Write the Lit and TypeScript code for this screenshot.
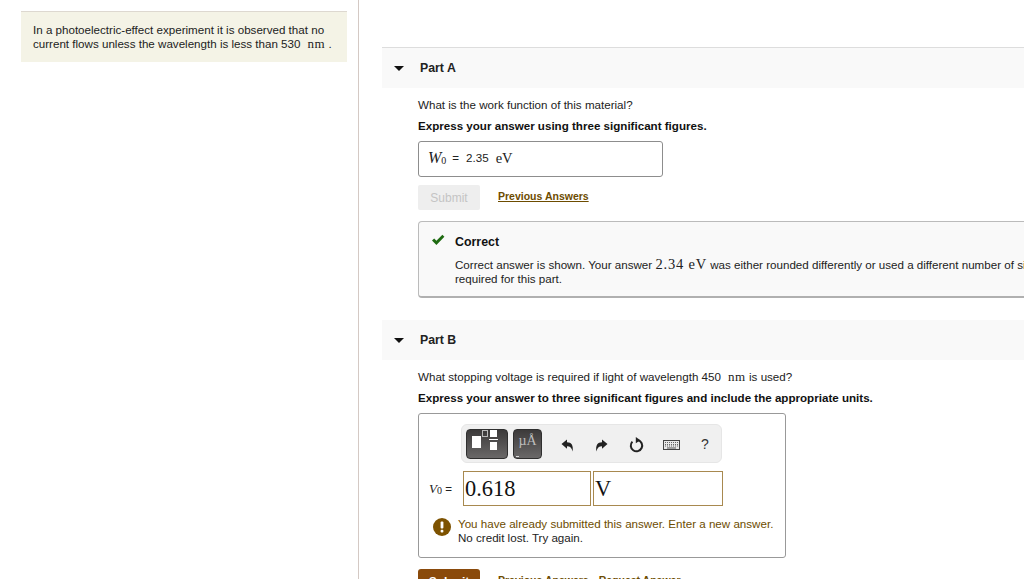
import { LitElement, html, css } from 'lit';
import { customElement } from 'lit/decorators.js';

@customElement('app-root')
export class AppRoot extends LitElement {
  static styles = css`
    :host {
      display: flex;
      width: 1024px;
      height: 579px;
      overflow: hidden;
      background: #fff;
      color: #222;
      font-family: "Liberation Sans", Arial, sans-serif;
      font-size: 11.6px;
      line-height: 14px;
    }

    .left {
      flex: none;
      width: 359px;
      height: 579px;
      box-sizing: border-box;
      border-right: 1px solid #d4c9c4;
      padding-top: 11px;
    }

    .statement {
      margin-left: 21px;
      width: 326px;
      height: 51px;
      box-sizing: border-box;
      border-top: 1px solid #ddd8d0;
      background: #f4f3e6;
      padding: 11px 0 0 12px;
    }

    .right {
      flex: none;
      margin-left: 23px;
      width: 642px;
      padding-top: 47px;
    }

    .part-head {
      display: flex;
      align-items: center;
      height: 40px;
      background: #f9f9f9;
      font-size: 12.3px;
      font-weight: bold;
      color: #222;
    }

    .part-head.first {
      border-top: 1px solid #ddd;
    }

    .caret {
      width: 0;
      height: 0;
      margin: 0 16px 0 12px;
      border-left: 5px solid transparent;
      border-right: 5px solid transparent;
      border-top: 5px solid #111;
    }

    .part-body {
      padding-left: 36px;
    }

    .q {
      margin-top: 10px;
    }

    .hint {
      margin-top: 7px;
      font-weight: bold;
      color: #111;
    }

    .mth {
      font-family: "Liberation Serif", "Times New Roman", serif;
      font-size: 13px;
      letter-spacing: 0.6px;
    }

    .answer {
      display: flex;
      align-items: center;
      width: 245px;
      height: 36px;
      margin-top: 8px;
      padding: 0 0 2px 9px;
      box-sizing: border-box;
      border: 1px solid #8d8d8d;
      border-radius: 3px;
    }

    .answer i {
      font-family: "Liberation Serif", serif;
      font-size: 16px;
    }

    .answer sub {
      font-family: "Liberation Serif", serif;
      font-size: 10px;
      line-height: 0;
      margin-top: 6px;
    }

    .answer .eq {
      margin: 0 7px 0 6px;
    }

    .answer .unit {
      margin-left: 7px;
      font-family: "Liberation Serif", serif;
      font-size: 14.5px;
    }

    .actions {
      display: flex;
      align-items: center;
      margin-top: 8px;
      height: 25px;
    }

    .actions.last {
      margin-top: 11px;
    }

    .submit {
      display: flex;
      align-items: center;
      justify-content: center;
      width: 62px;
      height: 25px;
      border-radius: 2px;
      background: #eee;
      color: #c4c4c4;
      font-size: 12px;
    }

    .submit.active {
      background: #8a4a0b;
      color: #fff;
      font-weight: bold;
      border-radius: 3px;
    }

    .link {
      margin-left: 18px;
      color: #6d4c00;
      font-weight: bold;
      font-size: 10.5px;
      text-decoration: underline;
      padding-bottom: 3px;
    }

    .link.plain {
      text-decoration: none;
    }

    .link.plain + .link.plain {
      margin-left: 10px;
    }

    .correct {
      position: relative;
      width: 760px;
      height: 77px;
      margin-top: 11px;
      box-sizing: border-box;
      border: 1px solid #bbb;
      border-bottom: 2px solid #b0b0b0;
      border-radius: 4px;
      background: #f9f9f9;
      padding: 13px 0 0 36px;
    }

    .correct svg {
      position: absolute;
      left: 12px;
      top: 12px;
    }

    .correct b {
      display: block;
      font-size: 12.4px;
      color: #111;
      margin-bottom: 9px;
    }

    .correct .mth {
      font-size: 14.5px;
      letter-spacing: 0.8px;
      line-height: 0;
    }

    .correct .line {
      display: block;
      white-space: nowrap;
      line-height: 14px;
    }

    .part-b {
      margin-top: 22px;
    }

    .workspace {
      width: 368px;
      height: 145px;
      margin-top: 8px;
      box-sizing: border-box;
      border: 1px solid #999;
      border-radius: 3px;
      padding-top: 10px;
    }

    .toolbar {
      display: flex;
      align-items: center;
      width: 261px;
      height: 39px;
      margin-left: 42px;
      box-sizing: border-box;
      padding: 0 0 0 4px;
      border: 1px solid #e6e6e6;
      border-radius: 6px;
      background: #f0f0f0;
    }

    .tpl {
      display: flex;
      flex: none;
      height: 30px;
      box-sizing: border-box;
      border: 1px solid #2f2f2f;
      border-radius: 4px;
      background: linear-gradient(#3c3a3a, #6a6868);
      overflow: hidden;
    }

    .tpl.frac {
      width: 42px;
      margin-right: 5px;
    }

    .tpl.units {
      position: relative;
      width: 29px;
      margin-right: 18px;
      justify-content: center;
      color: #bdbdbd;
      font-family: "Liberation Serif", serif;
      font-size: 14px;
      line-height: 21px;
    }

    .tpl.units::after {
      content: "";
      position: absolute;
      left: 2px;
      bottom: 1px;
      width: 3px;
      height: 1px;
      background: #ddd;
    }

    .tool {
      display: flex;
      flex: none;
      justify-content: center;
      align-items: center;
      padding-top: 3px;
      color: #333;
    }

    .tool.undo,
    .tool.redo {
      width: 15px;
      margin-right: 19px;
    }

    .tool.reset {
      width: 16px;
      margin-right: 18px;
    }

    .tool.keys {
      width: 18px;
      margin-right: 20px;
    }

    .tool.help {
      width: 10px;
      font-size: 14px;
      padding-top: 0;
    }

    .entry {
      display: flex;
      align-items: center;
      height: 35px;
      margin-top: 8px;
    }

    .var {
      flex: none;
      width: 44px;
      box-sizing: border-box;
      padding-left: 10px;
      white-space: nowrap;
    }

    .var i {
      font-family: "Liberation Serif", serif;
      font-size: 13px;
    }

    .var sub {
      font-family: "Liberation Serif", serif;
      font-size: 10px;
      line-height: 0;
      vertical-align: -1px;
    }

    .field {
      flex: none;
      display: flex;
      align-items: center;
      width: 128px;
      height: 35px;
      box-sizing: border-box;
      border: 1px solid #a8894f;
      padding-left: 1px;
      font-family: "Liberation Serif", serif;
      font-size: 22.4px;
      color: #111;
    }

    .field + .field {
      width: 130px;
      margin-left: 2px;
    }

    .warn {
      display: flex;
      margin: 11px 0 0 14px;
      line-height: 14px;
    }

    .warn svg {
      flex: none;
      margin: 1px 7px 0 0;
    }

    .warn .msg {
      color: #6d4c00;
    }
  `;

  render() {
    return html`
      <div class="left">
        <div class="statement">
          In a photoelectric-effect experiment it is observed that no<br />
          current flows unless the wavelength is less than 530 <span class="mth">&nbsp;nm</span> .
        </div>
      </div>
      <div class="right">
        <div class="part-head first"><span class="caret"></span>Part A</div>
        <div class="part-body">
          <div class="q">What is the work function of this material?</div>
          <div class="hint">Express your answer using three significant figures.</div>
          <div class="answer">
            <i>W</i><sub>0</sub><span class="eq">=</span>2.35<span class="unit">eV</span>
          </div>
          <div class="actions">
            <span class="submit">Submit</span>
            <span class="link">Previous Answers</span>
          </div>
          <div class="correct">
            <svg width="14" height="12" viewBox="0 0 14 12">
              <path d="M1 6.5 L3.2 4.4 L5.4 6.8 L11.4 0.8 L13.4 2.8 L5.4 11 Z" fill="#1f6b12" />
            </svg>
            <b>Correct</b>
            <span class="line"
              >Correct answer is shown. Your answer <span class="mth">2.34 eV</span> was either rounded
              differently or used a different number of significant figures than</span
            >
            <span class="line">required for this part.</span>
          </div>
        </div>
        <div class="part-head part-b"><span class="caret"></span>Part B</div>
        <div class="part-body">
          <div class="q">
            What stopping voltage is required if light of wavelength 450 <span class="mth">&nbsp;nm</span> is used?
          </div>
          <div class="hint">Express your answer to three significant figures and include the appropriate units.</div>
          <div class="workspace">
            <div class="toolbar">
              <span class="tpl frac">
                <svg width="40" height="28" viewBox="0 0 40 28">
                  <rect x="5" y="6" width="9" height="12" fill="#fff" />
                  <rect x="15.5" y="0.5" width="5" height="6" fill="none" stroke="#bbb" />
                  <rect x="23" y="0" width="7" height="7" fill="#fff" />
                  <rect x="22" y="9" width="9" height="1" fill="#fff" />
                  <rect x="23" y="12" width="7" height="8" fill="#fff" />
                </svg>
              </span>
              <span class="tpl units">µÅ</span>
              <span class="tool undo">
                <svg width="13" height="13" viewBox="0 0 13 13">
                  <path d="M0.5 5 L6 0.5 V3.3 C10.5 3.3 12.6 6.5 11.6 12.5 C10.8 9 9.2 7.2 6 7.2 V9.8 Z" fill="#222" />
                </svg>
              </span>
              <span class="tool redo">
                <svg width="13" height="13" viewBox="0 0 13 13">
                  <path d="M12.5 5 L7 0.5 V3.3 C2.5 3.3 0.4 6.5 1.4 12.5 C2.2 9 3.8 7.2 7 7.2 V9.8 Z" fill="#222" />
                </svg>
              </span>
              <span class="tool reset">
                <svg width="15" height="16" viewBox="0 0 15 16">
                  <path d="M9 3.1 A5.7 5.7 0 1 1 3.4 4.6" fill="none" stroke="#222" stroke-width="2" />
                  <path d="M6.8 0 L11.4 3.2 L6.8 6.2 Z" fill="#222" />
                </svg>
              </span>
              <span class="tool keys">
                <svg width="17" height="10" viewBox="0 0 17 10">
                  <rect x="0.5" y="0.5" width="16" height="9" fill="#e8e8e8" stroke="#444" />
                  <path d="M2 2.5 H15 M2 4.5 H15 M2 6 H15" stroke="#666" stroke-dasharray="1 1" />
                  <path d="M4 8 H13" stroke="#555" />
                </svg>
              </span>
              <span class="tool help">?</span>
            </div>
            <div class="entry">
              <span class="var"><i>V</i><sub>0</sub> =</span>
              <span class="field">0.618</span>
              <span class="field">V</span>
            </div>
            <div class="warn">
              <svg width="18" height="18" viewBox="0 0 18 18">
                <circle cx="9" cy="9" r="9" fill="#7d5200" />
                <rect x="7.6" y="3.5" width="2.8" height="7" rx="1" fill="#fff" />
                <rect x="7.6" y="11.8" width="2.8" height="2.8" rx="1" fill="#fff" />
              </svg>
              <div>
                <span class="msg">You have already submitted this answer. Enter a new answer.</span><br />
                No credit lost. Try again.
              </div>
            </div>
          </div>
          <div class="actions last">
            <span class="submit active">Submit</span>
            <span class="link plain">Previous Answers</span>
            <span class="link plain">Request Answer</span>
          </div>
        </div>
      </div>
    `;
  }
}
